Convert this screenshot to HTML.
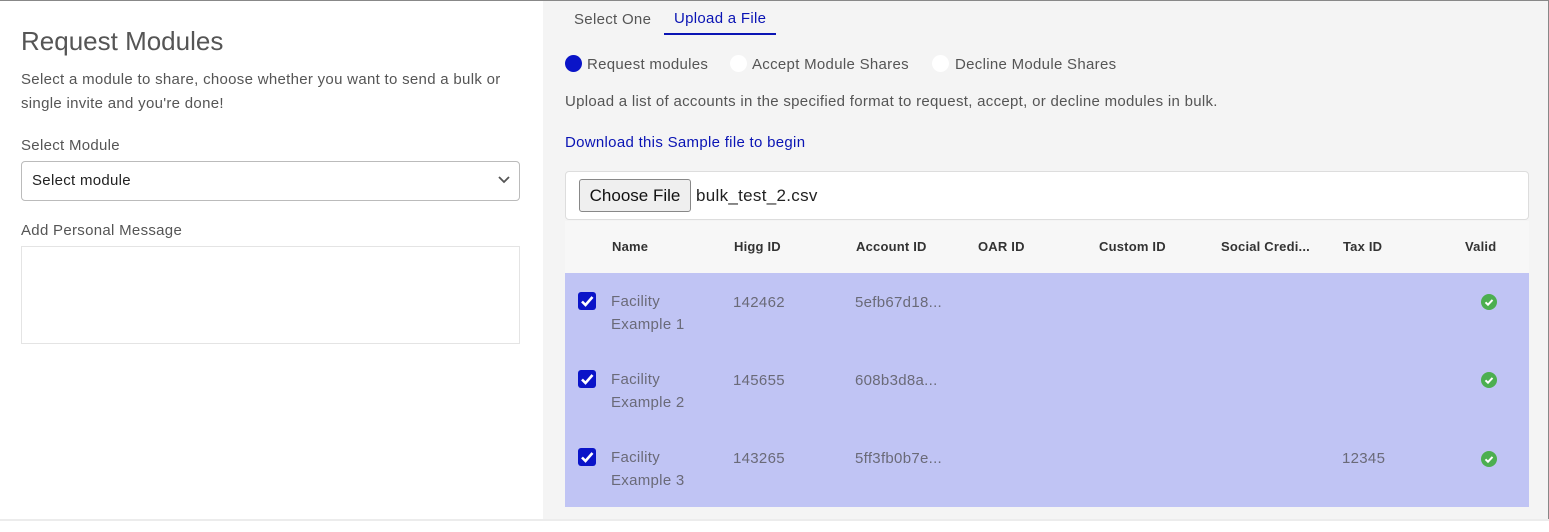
<!DOCTYPE html>
<html><head><meta charset="utf-8"><style>
*{box-sizing:border-box;margin:0;padding:0}
body{width:1549px;height:532px;position:relative;background:#fff;font-family:"Liberation Sans",Arial,sans-serif;overflow:hidden;letter-spacing:0.3px}
.a{position:absolute;white-space:nowrap}
.g{color:#555}
.t{color:#6a6a78;font-size:15px}
.h{font-weight:bold;font-size:13px;color:#333;letter-spacing:0.2px}
.cb{position:absolute;width:18px;height:18px;background:#0a14c8;border-radius:3px}
.ok{position:absolute;width:16px;height:16px;border-radius:50%;background:#4caf50}
</style></head><body>
<div class="a" style="left:0;top:0;width:1549px;height:1px;background:#888"></div>
<div class="a" style="left:543px;top:1px;width:1005px;height:518px;background:#f4f4f4"></div>
<div class="a" style="left:1548px;top:0;width:1px;height:520px;background:#888"></div>
<div class="a" style="left:0;top:519px;width:1549px;height:2px;background:#ececec"></div>

<div class="a" style="left:21px;top:26px;font-size:26px;color:#555;letter-spacing:0">Request Modules</div>
<div class="a g" style="left:21px;top:68px;font-size:15px;line-height:24px">Select a module to share, choose whether you want to send a bulk or<br>single invite and you're done!</div>
<div class="a g" style="left:21px;top:137px;font-size:15px">Select Module</div>
<div class="a" style="left:21px;top:161px;width:499px;height:40px;border:1px solid #bbb;border-radius:4px;background:#fff"></div>
<div class="a" style="left:32px;top:172px;font-size:15px;color:#222">Select module</div>
<svg class="a" style="left:497px;top:175px" width="14" height="10"><path d="M2 2l5 5 5-5" stroke="#555" stroke-width="1.8" fill="none"/></svg>
<div class="a g" style="left:21px;top:222px;font-size:15px">Add Personal Message</div>
<div class="a" style="left:21px;top:246px;width:499px;height:98px;border:1px solid #e4e4e4;background:#fff"></div>

<div class="a" style="left:574px;top:11px;font-size:15px;color:#555">Select One</div>
<div class="a" style="left:674px;top:10px;font-size:15px;color:#0a14b4">Upload a File</div>
<div class="a" style="left:664px;top:33px;width:112px;height:2px;background:#0a14b4"></div>

<div class="a" style="left:565px;top:55px;width:17px;height:17px;border-radius:50%;background:#0a14c8"></div>
<div class="a" style="left:587px;top:56px;font-size:15px;color:#555">Request modules</div>
<div class="a" style="left:730px;top:55px;width:17px;height:17px;border-radius:50%;background:#fff"></div>
<div class="a" style="left:752px;top:56px;font-size:15px;color:#555">Accept Module Shares</div>
<div class="a" style="left:932px;top:55px;width:17px;height:17px;border-radius:50%;background:#fff"></div>
<div class="a" style="left:955px;top:56px;font-size:15px;color:#555">Decline Module Shares</div>
<div class="a" style="left:565px;top:93px;font-size:15px;color:#555">Upload a list of accounts in the specified format to request, accept, or decline modules in bulk.</div>
<div class="a" style="left:565px;top:134px;font-size:15px;color:#0a14b4">Download this Sample file to begin</div>

<div class="a" style="left:565px;top:171px;width:964px;height:49px;background:#fff;border:1px solid #ddd;border-radius:4px"></div>
<div class="a" style="left:579px;top:179px;width:112px;height:33px;background:#efefef;border:1px solid #888;border-radius:3px;font-size:17px;color:#111;text-align:center;line-height:31px;letter-spacing:0">Choose File</div>
<div class="a" style="left:696px;top:186px;font-size:17px;color:#222">bulk_test_2.csv</div>

<div class="a" style="left:565px;top:221px;width:964px;height:52px;background:#f7f7f7"></div>
<div class="a h" style="left:612px;top:239px">Name</div>
<div class="a h" style="left:734px;top:239px">Higg ID</div>
<div class="a h" style="left:856px;top:239px">Account ID</div>
<div class="a h" style="left:978px;top:239px">OAR ID</div>
<div class="a h" style="left:1099px;top:239px">Custom ID</div>
<div class="a h" style="left:1221px;top:239px">Social Credi...</div>
<div class="a h" style="left:1343px;top:239px">Tax ID</div>
<div class="a h" style="left:1465px;top:239px">Valid</div>

<div class="a" style="left:565px;top:273px;width:964px;height:234px;background:#c0c4f4"></div>

<div class="cb" style="left:578px;top:292px"></div>
<svg class="a" style="left:578px;top:292px" width="18" height="18"><path d="M4 9.5l3.5 3.5 7-8" stroke="#fff" stroke-width="2.6" fill="none"/></svg>
<div class="a t" style="left:611px;top:290px;line-height:23px">Facility<br>Example 1</div>
<div class="a t" style="left:733px;top:294px">142462</div>
<div class="a t" style="left:855px;top:294px">5efb67d18...</div>
<div class="ok" style="left:1481px;top:294px"></div>
<svg class="a" style="left:1481px;top:294px" width="16" height="16"><path d="M4.5 8.3l2.5 2.4 4.5-4.8" stroke="#fff" stroke-width="2" fill="none"/></svg>

<div class="cb" style="left:578px;top:370px"></div>
<svg class="a" style="left:578px;top:370px" width="18" height="18"><path d="M4 9.5l3.5 3.5 7-8" stroke="#fff" stroke-width="2.6" fill="none"/></svg>
<div class="a t" style="left:611px;top:368px;line-height:23px">Facility<br>Example 2</div>
<div class="a t" style="left:733px;top:372px">145655</div>
<div class="a t" style="left:855px;top:372px">608b3d8a...</div>
<div class="ok" style="left:1481px;top:372px"></div>
<svg class="a" style="left:1481px;top:372px" width="16" height="16"><path d="M4.5 8.3l2.5 2.4 4.5-4.8" stroke="#fff" stroke-width="2" fill="none"/></svg>

<div class="cb" style="left:578px;top:448px"></div>
<svg class="a" style="left:578px;top:448px" width="18" height="18"><path d="M4 9.5l3.5 3.5 7-8" stroke="#fff" stroke-width="2.6" fill="none"/></svg>
<div class="a t" style="left:611px;top:446px;line-height:23px">Facility<br>Example 3</div>
<div class="a t" style="left:733px;top:450px">143265</div>
<div class="a t" style="left:855px;top:450px">5ff3fb0b7e...</div>
<div class="a t" style="left:1342px;top:450px">12345</div>
<div class="ok" style="left:1481px;top:451px"></div>
<svg class="a" style="left:1481px;top:451px" width="16" height="16"><path d="M4.5 8.3l2.5 2.4 4.5-4.8" stroke="#fff" stroke-width="2" fill="none"/></svg>
</body></html>
